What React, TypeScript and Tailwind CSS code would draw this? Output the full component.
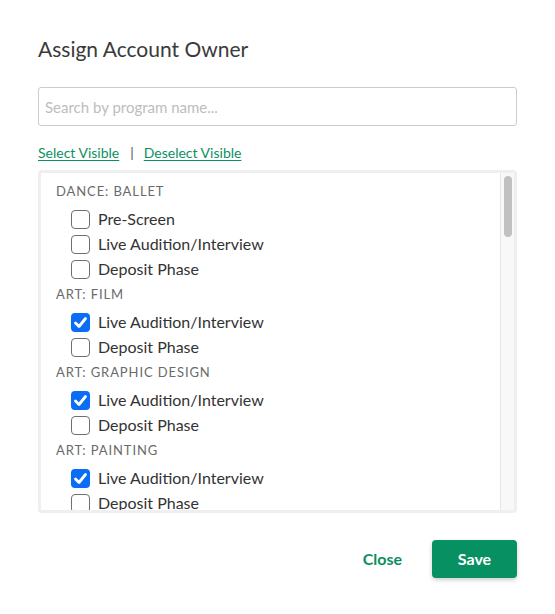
import React from "react";

type Group = { name: string; items: { label: string; checked: boolean }[] };

const groups: Group[] = [
  {
    name: "Dance: Ballet",
    items: [
      { label: "Pre-Screen", checked: false },
      { label: "Live Audition/Interview", checked: false },
      { label: "Deposit Phase", checked: false },
    ],
  },
  {
    name: "Art: Film",
    items: [
      { label: "Live Audition/Interview", checked: true },
      { label: "Deposit Phase", checked: false },
    ],
  },
  {
    name: "Art: Graphic Design",
    items: [
      { label: "Live Audition/Interview", checked: true },
      { label: "Deposit Phase", checked: false },
    ],
  },
  {
    name: "Art: Painting",
    items: [
      { label: "Live Audition/Interview", checked: true },
      { label: "Deposit Phase", checked: false },
    ],
  },
];

function Checkbox({ checked }: { checked: boolean }) {
  if (checked) {
    return (
      <span className="w-[19px] h-[19px] shrink-0 rounded-[4px] bg-[#0b6cf6] flex items-center justify-center">
        <svg width="15" height="15" viewBox="0 0 15 15" fill="none">
          <path
            d="M2.5 8 L6 11.5 L12.5 3.5"
            stroke="white"
            strokeWidth="2.8"
            strokeLinecap="round"
            strokeLinejoin="round"
          />
        </svg>
      </span>
    );
  }
  return <span className="w-[19px] h-[19px] shrink-0 rounded-[4px] border border-[#6f6f6f] bg-white" />;
}

export default function App() {
  return (
    <div className="w-[555px] h-[614px] bg-white px-[38px] pt-[36px] font-['Lato','Liberation_Sans',sans-serif]">
      <h1 className="text-[21px] leading-[25px] text-[#3a3a3a] font-normal">Assign Account Owner</h1>

      <input
        type="text"
        placeholder="Search by program name..."
        className="mt-[26px] w-full h-[39px] border border-[#cccccc] rounded-[3px] px-[6px] text-[15px] text-[#333] placeholder:text-[#bdbdbd] outline-none"
      />

      <div className="mt-[18px] flex items-center text-[14px] leading-[17px]">
        <a href="#" className="text-[#0b8f5f] underline underline-offset-2">Select Visible</a>
        <span className="ml-[11px] mr-[10px] text-[#555]">|</span>
        <a href="#" className="text-[#0b8f5f] underline underline-offset-2">Deselect Visible</a>
      </div>

      <div className="mt-[9px] h-[343px] border-[3px] border-[#efefef] rounded-[4px] flex overflow-hidden">
        <div className="flex-1 overflow-hidden pt-[5.5px] pl-[15px]">
          {groups.map((g) => (
            <div key={g.name}>
              <div className="h-[25px] mb-[3px] pt-[2px] flex items-center text-[13px] uppercase tracking-[0.9px] text-[#6a6a6a]">
                {g.name}
              </div>
              {g.items.map((it, i) => (
                <label key={i} className="h-[25px] pl-[15px] flex items-center gap-[8px] text-[16px] text-[#333]">
                  <Checkbox checked={it.checked} />
                  <span>{it.label}</span>
                </label>
              ))}
            </div>
          ))}
        </div>
        <div className="w-[14px] shrink-0 bg-[#f8f8f8] border-l border-[#e5e5e5] pt-[3px] flex justify-center">
          <div className="w-[8px] h-[61px] rounded-full bg-[#c1c1c1]" />
        </div>
      </div>

      <div className="mt-[27px] flex items-center justify-end gap-[30px]">
        <button className="text-[16px] font-bold text-[#0b8f5f]">Close</button>
        <button className="w-[85px] h-[38px] rounded-[4px] bg-[#079162] text-white text-[16px] font-bold shadow-[0_2px_4px_rgba(0,0,0,0.2)]">
          Save
        </button>
      </div>
    </div>
  );
}
